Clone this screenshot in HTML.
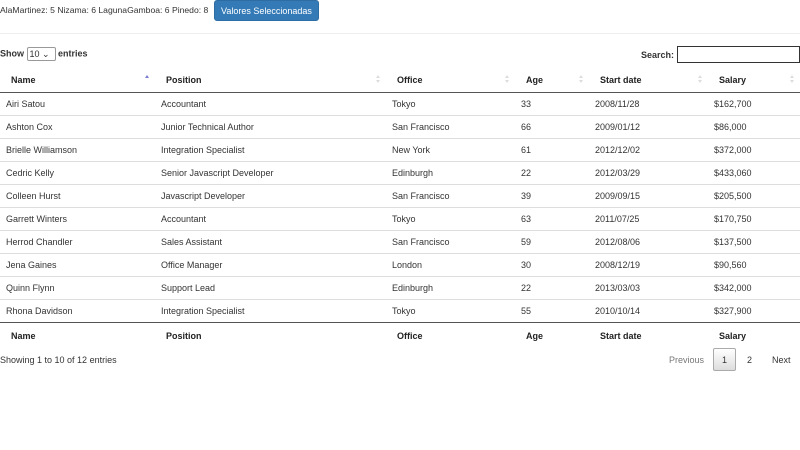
<!DOCTYPE html><html><head><style>
body{margin:0;width:800px;height:450px;background:#fff;font-family:"Liberation Sans",sans-serif;font-size:9px;color:#333;position:relative;overflow:hidden}
.a{position:absolute;white-space:nowrap}
.btn{position:absolute;left:214px;top:0;width:105px;height:21px;background:#337ab7;border:1px solid #2e6da4;border-radius:3px;color:#fff;font-size:9px;line-height:20px;text-align:center;box-sizing:border-box}
table{position:absolute;left:0;top:68px;width:800px;border-collapse:collapse;table-layout:fixed}
th{font-weight:bold;text-align:left;height:24px;padding:0 0 0 11px;position:relative;color:#222}
thead th{border-bottom:1px solid #555}
tfoot th{border-top:1px solid #555;height:25px;padding-top:0}
td{height:22px;padding:0 0 0 6px;border-top:1px solid #ddd}
tbody tr:first-child td{border-top:none}
.s{position:absolute;right:5px;top:7px;width:5px;height:10px}
.s:before,.s:after{content:"";position:absolute;left:0;border-left:2.5px solid transparent;border-right:2.5px solid transparent}
.s:before{top:0;border-bottom:3px solid #ddd}.s:after{top:5px;border-top:3px solid #ddd}
.s.up:before{border-bottom-color:#7b7bd0}.s.up:after{border-top-color:transparent}
</style></head><body>
<div class="a" style="left:0;top:5px;font-size:8.6px">AlaMartinez: 5 Nizama: 6 LagunaGamboa: 6 Pinedo: 8</div>
<div class="btn">Valores Seleccionadas</div>
<div class="a" style="left:0;top:33px;width:800px;border-top:1px solid #eee"></div>
<div class="a" style="left:0;top:47px;font-weight:bold">Show <span style="display:inline-block;width:25px;height:12px;border:1px solid #999;border-radius:2px;font-weight:normal;vertical-align:middle;font-size:9px;line-height:12px;padding-left:2px">10 &#8964;</span> entries</div>
<div class="a" style="left:641px;top:50px;font-weight:bold">Search:</div>
<div class="a" style="left:677px;top:46px;width:121px;height:15px;border:1px solid #333"></div>
<table>
<colgroup><col style="width:155px"><col style="width:231px"><col style="width:129px"><col style="width:74px"><col style="width:119px"><col style="width:92px"></colgroup>
<thead><tr><th>Name<span class="s up"></span></th><th>Position<span class="s"></span></th><th>Office<span class="s"></span></th><th>Age<span class="s"></span></th><th>Start date<span class="s"></span></th><th>Salary<span class="s"></span></th></tr></thead>
<tbody>
<tr><td>Airi Satou</td><td>Accountant</td><td>Tokyo</td><td>33</td><td>2008/11/28</td><td>$162,700</td></tr>
<tr><td>Ashton Cox</td><td>Junior Technical Author</td><td>San Francisco</td><td>66</td><td>2009/01/12</td><td>$86,000</td></tr>
<tr><td>Brielle Williamson</td><td>Integration Specialist</td><td>New York</td><td>61</td><td>2012/12/02</td><td>$372,000</td></tr>
<tr><td>Cedric Kelly</td><td>Senior Javascript Developer</td><td>Edinburgh</td><td>22</td><td>2012/03/29</td><td>$433,060</td></tr>
<tr><td>Colleen Hurst</td><td>Javascript Developer</td><td>San Francisco</td><td>39</td><td>2009/09/15</td><td>$205,500</td></tr>
<tr><td>Garrett Winters</td><td>Accountant</td><td>Tokyo</td><td>63</td><td>2011/07/25</td><td>$170,750</td></tr>
<tr><td>Herrod Chandler</td><td>Sales Assistant</td><td>San Francisco</td><td>59</td><td>2012/08/06</td><td>$137,500</td></tr>
<tr><td>Jena Gaines</td><td>Office Manager</td><td>London</td><td>30</td><td>2008/12/19</td><td>$90,560</td></tr>
<tr><td>Quinn Flynn</td><td>Support Lead</td><td>Edinburgh</td><td>22</td><td>2013/03/03</td><td>$342,000</td></tr>
<tr><td>Rhona Davidson</td><td>Integration Specialist</td><td>Tokyo</td><td>55</td><td>2010/10/14</td><td>$327,900</td></tr>
</tbody>
<tfoot><tr><th>Name</th><th>Position</th><th>Office</th><th>Age</th><th>Start date</th><th>Salary</th></tr></tfoot>
</table>
<div class="a" style="left:0;top:355px">Showing 1 to 10 of 12 entries</div>
<div class="a" style="left:669px;top:355px;color:#777">Previous</div>
<div class="a" style="left:713px;top:348px;width:23px;height:23px;border:1px solid #aaa;border-radius:2px;background:linear-gradient(#fff,#ddd);box-sizing:border-box;text-align:center;line-height:22px">1</div>
<div class="a" style="left:747px;top:355px">2</div>
<div class="a" style="left:772px;top:355px">Next</div>
</body></html>
